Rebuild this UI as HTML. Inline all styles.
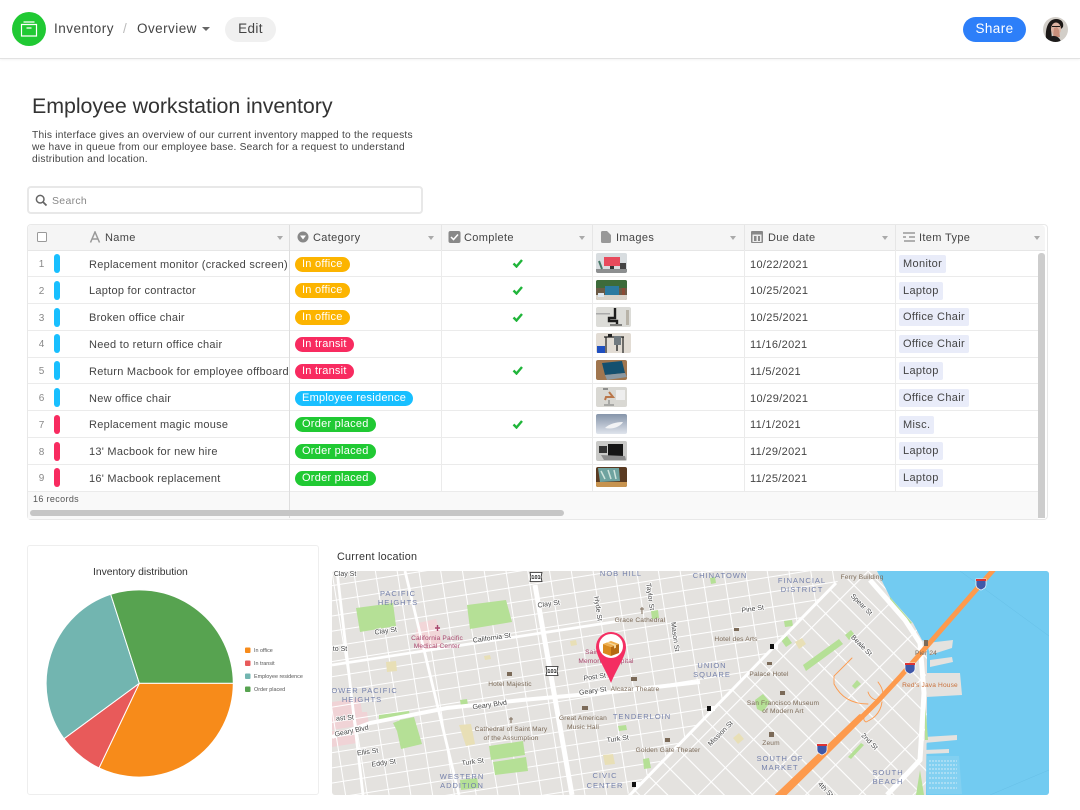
<!DOCTYPE html>
<html><head><meta charset="utf-8"><style>
html,body{margin:0;padding:0;background:#fff}
#p{position:relative;width:1080px;height:810px;overflow:hidden;font-family:"Liberation Sans",sans-serif;color:#333;background:#fff}
#p div,#p span.a,#p svg.a{position:absolute;white-space:nowrap}
.h{font-size:11px;letter-spacing:.35px;color:#444;top:231.5px;line-height:13px}
.ar{width:0;height:0;border:3.2px solid transparent;border-top:4px solid #aaa;border-bottom:0;top:235.5px}
.r{left:28px;width:1010px;height:26.8px;box-sizing:border-box;background:#fff;border-bottom:1.4px solid #ebebeb}
.n{left:0;width:27px;text-align:center;font-size:10px;color:#888;top:7.5px;line-height:13px}
.b{left:25.5px;top:3.5px;width:6.5px;height:19px;border-radius:3px}
.t{left:61px;top:7.2px;font-size:11px;letter-spacing:.26px;color:#444;line-height:14px}
.c{left:267px;top:6px;height:15px;line-height:15px;border-radius:8px;color:#fff;font-size:11px;letter-spacing:.25px;padding:0 7px}
.k{left:484px;top:7.5px}
.th{left:568px;top:2.5px;border-radius:2px}
.d2{left:722px;top:7.2px;font-size:11px;letter-spacing:.32px;color:#444;line-height:14px}
.y{left:871px;top:4.3px;height:18px;line-height:18px;background:#e9ecf9;border-radius:2px;font-size:11px;letter-spacing:.35px;color:#444;padding:0 4px}
.v{width:1.3px;background:#ebebeb;top:250px;height:241px}
.io{background:#fcb400}.tr{background:#f82b60}.er{background:#18bfff}.op{background:#20c933}
.bb{background:#18bfff}.br{background:#f82b60}
svg text{font-family:"Liberation Sans",sans-serif}
.m{font-size:7.5px;letter-spacing:1px;fill:#7581ab;text-anchor:middle}
.o{font-size:6.6px;fill:#7b6a58;text-anchor:middle;letter-spacing:.15px}
.s{font-size:7px;fill:#444;text-anchor:middle;stroke:#fff;stroke-width:1.6px;paint-order:stroke}
.l{font-size:5.4px;fill:#555}
</style></head><body><div id="p">

<!-- top bar -->
<div style="left:0;top:0;width:1080px;height:58px;background:#fff;border-bottom:1px solid #e2e2e2;box-shadow:0 1px 2px rgba(0,0,0,.05)"></div>
<svg class="a" style="left:12px;top:12px" width="34" height="34" viewBox="0 0 34 34"><circle cx="17" cy="17" r="17" fill="#20c933"/><g fill="none" stroke="#fff" stroke-width="1.2"><path d="M9.5 12.5h15v11.5h-15zM11.5 10h11M14.5 16h5"/></g></svg>
<div style="left:54px;top:21px;font-size:13.5px;letter-spacing:.5px;color:#444;line-height:16px">Inventory</div>
<div style="left:123px;top:21px;font-size:13.5px;color:#bbb;line-height:16px">/</div>
<div style="left:137px;top:21px;font-size:13.5px;letter-spacing:.45px;color:#444;line-height:16px">Overview</div>
<div style="left:202px;top:27px;width:0;height:0;border:4px solid transparent;border-top:4.5px solid #666;border-bottom:0"></div>
<div style="left:225px;top:17px;width:51px;height:25px;border-radius:13px;background:#f0f0f0;text-align:center;line-height:24px;font-size:13.5px;letter-spacing:.4px;color:#444">Edit</div>
<div style="left:963px;top:17px;width:63px;height:25px;border-radius:13px;background:#2d7ff9;text-align:center;line-height:24px;font-size:13.5px;letter-spacing:.4px;color:#fff">Share</div>
<svg class="a" style="left:1043px;top:17px" width="25" height="25" viewBox="0 0 25 25"><defs><clipPath id="av"><circle cx="12.5" cy="12.5" r="12.5"/></clipPath></defs><g clip-path="url(#av)"><rect width="25" height="25" fill="#d2cec8"/><path d="M3 22C2 12 5 2 13 2c6 0 8 4 7 8l-2 2-8-5-2 5 1 10z" fill="#1c1816"/><ellipse cx="13" cy="12" rx="5" ry="6.5" fill="#dcb3a1"/><path d="M9 9.500h8" stroke="#1c1816" stroke-width="1"/><path d="M10 20l1-9 3-1 2 3 1 7z" fill="#c98f7b"/><path d="M3 25c1-5 5-6 8-6s6 2 7 6z" fill="#1d1b1b"/></g></svg>

<!-- heading -->
<div style="left:32px;top:93px;font-size:21.4px;letter-spacing:-.05px;color:#333;line-height:26px">Employee workstation inventory</div>
<div style="left:32px;top:130px;font-size:10.2px;letter-spacing:.23px;color:#444;line-height:12px">This interface gives an overview of our current inventory mapped to the requests<br>we have in queue from our employee base. Search for a request to understand<br>distribution and location.</div>
<div style="left:27px;top:186px;width:392px;height:24px;border:2px solid #e8e8e8;border-radius:4px;background:#fff"></div>
<svg class="a" style="left:35px;top:194px" width="13" height="13" viewBox="0 0 13 13"><circle cx="5.2" cy="5.2" r="3.8" fill="none" stroke="#666" stroke-width="1.5"/><path d="M8 8l3.5 3.500" stroke="#666" stroke-width="1.8"/></svg>
<div style="left:52px;top:194.500px;font-size:10.5px;letter-spacing:.3px;color:#888;line-height:13px">Search</div>

<!-- table -->
<div style="left:27px;top:224px;width:1019px;height:294px;border:1px solid #e8e8e8;border-radius:4px;background:#fff"></div>
<div style="left:28px;top:225px;width:1017px;height:25px;background:#f5f5f5;border-bottom:1.5px solid #e6e6e6;border-radius:4px 4px 0 0"></div>
<div style="left:28px;top:491px;width:1010px;height:27px;background:#f9f9f9;border-top:1.5px solid #ebebeb"></div>

<div class="r" style="top:250.500px"><span class="a n">1</span><span class="a b bb"></span><span class="a t">Replacement monitor (cracked screen)</span><span class="a c io">In office</span><svg class="a k" width="12" height="10" viewBox="0 0 12 10"><path d="M1.500 5.500L4.500 8.500 10 2" fill="none" stroke="#20b53a" stroke-width="2.400"/></svg>
<svg class="a th" width="31" height="20" viewBox="0 0 31 20"><rect width="31" height="20" fill="#d8dde0"/><rect y="16" width="31" height="4" fill="#8d8f90"/><rect x="8" y="4" width="16" height="9" fill="#e74a5c"/><rect x="14" y="13" width="4" height="3" fill="#333"/><rect x="24" y="10" width="6" height="6" fill="#444"/><path d="M3 8l3 8" stroke="#476" stroke-width="2"/></svg><span class="a d2">10/22/2021</span><span class="a y">Monitor</span></div>

<div class="r" style="top:277.300px"><span class="a n">2</span><span class="a b bb"></span><span class="a t">Laptop for contractor</span><span class="a c io">In office</span><svg class="a k" width="12" height="10" viewBox="0 0 12 10"><path d="M1.500 5.500L4.500 8.500 10 2" fill="none" stroke="#20b53a" stroke-width="2.400"/></svg>
<svg class="a th" width="31" height="20" viewBox="0 0 31 20"><rect width="31" height="20" fill="#6b5a45"/><rect width="31" height="8" fill="#3d6b3a"/><rect x="9" y="6" width="14" height="9" fill="#2b7aa0"/><rect y="15" width="31" height="5" fill="#d8d2c8"/><rect x="2" y="13" width="6" height="4" fill="#dfe7ee"/><rect x="26" y="8" width="3" height="7" fill="#8a4b35"/></svg><span class="a d2">10/25/2021</span><span class="a y">Laptop</span></div>

<div class="r" style="top:304.100px"><span class="a n">3</span><span class="a b bb"></span><span class="a t">Broken office chair</span><span class="a c io">In office</span><svg class="a k" width="12" height="10" viewBox="0 0 12 10"><path d="M1.500 5.500L4.500 8.500 10 2" fill="none" stroke="#20b53a" stroke-width="2.400"/></svg>
<svg class="a th" width="35" height="20" viewBox="0 0 35 20"><rect width="35" height="20" fill="#dcdcd8"/><rect y="6" width="14" height="1.500" fill="#aaa"/><path d="M19 1v10h-6v3h8v3" fill="none" stroke="#1d1d1d" stroke-width="2.400"/><path d="M14 18h12" stroke="#222"/><rect x="30" y="3" width="3" height="15" fill="#b8b3a8"/></svg><span class="a d2">10/25/2021</span><span class="a y">Office Chair</span></div>

<div class="r" style="top:330.900px"><span class="a n">4</span><span class="a b bb"></span><span class="a t">Need to return office chair</span><span class="a c tr">In transit</span>
<svg class="a th" width="35" height="20" viewBox="0 0 35 20"><rect width="35" height="20" fill="#e2dcd4"/><path d="M8 4h20M10 4v16M27 4v16" stroke="#222" stroke-width="1.200" fill="none"/><rect x="18" y="3" width="7" height="9" fill="#717a80"/><path d="M21 12v6" stroke="#333" stroke-width="1.500"/><rect x="1" y="13" width="8" height="7" fill="#1f4fc0"/><rect x="12" y="1" width="4" height="3" fill="#222"/></svg><span class="a d2">11/16/2021</span><span class="a y">Office Chair</span></div>

<div class="r" style="top:357.700px"><span class="a n">5</span><span class="a b bb"></span><span class="a t" style="width:200px;overflow:hidden">Return Macbook for employee offboard</span><span class="a c tr">In transit</span><svg class="a k" width="12" height="10" viewBox="0 0 12 10"><path d="M1.500 5.500L4.500 8.500 10 2" fill="none" stroke="#20b53a" stroke-width="2.400"/></svg>
<svg class="a th" width="31" height="20" viewBox="0 0 31 20"><rect width="31" height="20" fill="#a0764f"/><path d="M6 3l20-2 3 12-20 2z" fill="#14506f"/><path d="M9 15l20-2 2 4-20 3z" fill="#8b99a3"/></svg><span class="a d2">11/5/2021</span><span class="a y">Laptop</span></div>

<div class="r" style="top:384.500px"><span class="a n">6</span><span class="a b bb"></span><span class="a t">New office chair</span><span class="a c er">Employee residence</span>
<svg class="a th" width="31" height="20" viewBox="0 0 31 20"><rect width="31" height="20" fill="#d9d8d3"/><rect x="20" y="3" width="9" height="10" fill="#eee"/><path d="M13 5l4 5h-7l-1 3" fill="none" stroke="#b9764a" stroke-width="2"/><path d="M7 2h5" stroke="#444"/><path d="M13 13v4M8 18h10" stroke="#777"/></svg><span class="a d2">10/29/2021</span><span class="a y">Office Chair</span></div>

<div class="r" style="top:411.300px"><span class="a n">7</span><span class="a b br"></span><span class="a t">Replacement magic mouse</span><span class="a c op">Order placed</span><svg class="a k" width="12" height="10" viewBox="0 0 12 10"><path d="M1.500 5.500L4.500 8.500 10 2" fill="none" stroke="#20b53a" stroke-width="2.400"/></svg>
<svg class="a th" width="31" height="20" viewBox="0 0 31 20"><defs><linearGradient id="g7" x1="0" y1="0" x2="0" y2="1"><stop offset="0" stop-color="#8695aa"/><stop offset="1" stop-color="#dfe4ec"/></linearGradient></defs><rect width="31" height="20" fill="url(#g7)"/><path d="M9 14c4-4 11-6 18-6-2 4-10 8-18 6z" fill="#f2f3f5"/></svg><span class="a d2">11/1/2021</span><span class="a y">Misc.</span></div>

<div class="r" style="top:438.100px"><span class="a n">8</span><span class="a b br"></span><span class="a t">13' Macbook for new hire</span><span class="a c op">Order placed</span>
<svg class="a th" width="31" height="20" viewBox="0 0 31 20"><rect width="31" height="20" fill="#c9c9c7"/><rect x="3" y="5" width="8" height="7" fill="#333"/><path d="M12 3h15v12H12z" fill="#151515"/><path d="M5 14l24 1 1 4H8z" fill="#8c8c8c"/></svg><span class="a d2">11/29/2021</span><span class="a y">Laptop</span></div>

<div class="r" style="top:464.900px;height:26px;border-bottom:0"><span class="a n">9</span><span class="a b br"></span><span class="a t">16' Macbook replacement</span><span class="a c op">Order placed</span>
<svg class="a th" width="31" height="20" viewBox="0 0 31 20"><rect width="31" height="20" fill="#5a3b22"/><path d="M2 1l21 0 1 13-20 1z" fill="#6fa3a0"/><path d="M5 4l4 8M12 3l3 9M18 3l2 9" stroke="#cfe3dc" stroke-width="1.500"/><path d="M0 15h31v5H0z" fill="#c7934f"/></svg><span class="a d2">11/25/2021</span><span class="a y">Laptop</span></div>

<div class="v" style="left:441px"></div><div class="v" style="left:592px"></div><div class="v" style="left:743.500px"></div><div class="v" style="left:895px"></div>
<div style="left:289px;top:225px;width:1.400px;height:293px;background:#dedede"></div>
<div style="left:441px;top:225px;width:1.300px;height:25px;background:#e6e6e6"></div><div style="left:592px;top:225px;width:1.300px;height:25px;background:#e6e6e6"></div><div style="left:743.500px;top:225px;width:1.300px;height:25px;background:#e6e6e6"></div><div style="left:895px;top:225px;width:1.300px;height:25px;background:#e6e6e6"></div>

<!-- header labels -->
<div style="left:37px;top:232px;width:8px;height:8px;border:1px solid #999;border-radius:1.500px;background:#fff"></div>
<svg class="a" style="left:89px;top:231px" width="12" height="12" viewBox="0 0 12 12"><path d="M1.500 11.500L6 1l4.500 10.500M3.200 8h5.600" fill="none" stroke="#999" stroke-width="1.500"/></svg>
<div class="h" style="left:105px">Name</div><div class="ar" style="left:277px"></div>
<svg class="a" style="left:297px;top:231px" width="12" height="12" viewBox="0 0 12 12"><circle cx="6" cy="6" r="5.500" fill="#888"/><path d="M3 4.500h6L6 8.500z" fill="#fff"/></svg>
<div class="h" style="left:313px">Category</div><div class="ar" style="left:428px"></div>
<svg class="a" style="left:448px;top:231px" width="13" height="12" viewBox="0 0 13 12"><rect x=".5" width="12" height="12" rx="2" fill="#888"/><path d="M3 6l2.500 2.500L10 3.500" fill="none" stroke="#fff" stroke-width="1.500"/></svg>
<div class="h" style="left:464px">Complete</div><div class="ar" style="left:579px"></div>
<svg class="a" style="left:601px;top:231px" width="10" height="12" viewBox="0 0 10 12"><path d="M0 1.500A1.500 1.500 0 0 1 1.500 0H6l4 4v6.500A1.500 1.500 0 0 1 8.500 12h-7A1.500 1.500 0 0 1 0 10.500z" fill="#999"/></svg>
<div class="h" style="left:616px">Images</div><div class="ar" style="left:730px"></div>
<svg class="a" style="left:751px;top:231px" width="12" height="12" viewBox="0 0 12 12"><rect width="12" height="12" rx="1" fill="#888"/><rect x="1.500" y="3.500" width="9" height="7.500" fill="#fff" opacity=".85"/><rect x="3" y="5" width="2.500" height="5" fill="#888"/><rect x="7" y="5" width="2" height="5" fill="#888"/></svg>
<div class="h" style="left:768px">Due date</div><div class="ar" style="left:882px"></div>
<svg class="a" style="left:903px;top:231px" width="12" height="12" viewBox="0 0 12 12"><path d="M0 2h12M6 6h6M0 6h3M1 10h11" stroke="#888" stroke-width="1.300"/></svg>
<div class="h" style="left:919px">Item Type</div><div class="ar" style="left:1034px"></div>

<div style="left:33px;top:493px;font-size:9px;letter-spacing:.35px;color:#555;line-height:12px">16 records</div>
<div style="left:30px;top:510px;width:534px;height:6px;border-radius:3px;background:#c6c6c6"></div>
<div style="left:1038px;top:253px;width:7px;height:265px;border-radius:3px 3px 0 0;background:#cdcdcd"></div>

<!-- pie card -->
<div style="left:27px;top:545px;width:290px;height:248px;border:1px solid #eee;border-radius:3px"></div>
<div style="left:93px;top:565.500px;font-size:10.400px;letter-spacing:-.05px;color:#333;line-height:13px">Inventory distribution</div>
<svg class="a" style="left:0;top:0" width="330" height="810" viewBox="0 0 330 810">
<g stroke="#fff" stroke-width="1">
<path d="M139.300 683.300L233.300 683.300A94 94 0 0 1 99 768Z" fill="#f78b1a"/>
<path d="M139.300 683.300L99 768A94 94 0 0 1 64 738.700Z" fill="#e85a5a"/>
<path d="M139.300 683.300L64 738.700A94 94 0 0 1 110.700 594.300Z" fill="#72b5b0"/>
<path d="M139.300 683.300L110.700 594.300A94 94 0 0 1 233.300 683.300Z" fill="#57a350"/>
</g>
<rect x="245" y="647.500" width="5.500" height="5.500" rx="1" fill="#f78b1a"/><text class="l" x="254" y="652">In office</text>
<rect x="245" y="660.500" width="5.500" height="5.500" rx="1" fill="#e85a5a"/><text class="l" x="254" y="665">In transit</text>
<rect x="245" y="673.500" width="5.500" height="5.500" rx="1" fill="#72b5b0"/><text class="l" x="254" y="678">Employee residence</text>
<rect x="245" y="686.500" width="5.500" height="5.500" rx="1" fill="#57a350"/><text class="l" x="254" y="691">Order placed</text>
</svg>

<!-- map -->
<div style="left:337px;top:550.500px;font-size:10.800px;letter-spacing:.25px;color:#333;line-height:13px">Current location</div>
<svg class="a" style="left:0;top:0" width="1080" height="810" viewBox="0 0 1080 810">
<defs>
<clipPath id="mc"><rect x="332" y="571" width="717" height="224" rx="3"/></clipPath>
<clipPath id="soma"><polygon points="848,571 1060,571 1060,800 622,800"/></clipPath>
<pattern id="g1" width="21.500" height="15" patternUnits="userSpaceOnUse" patternTransform="rotate(-9 600 650) translate(3 4)"><path d="M0 0H21.500M0 0V15" stroke="#fff" stroke-width="2" fill="none"/></pattern>
<pattern id="g2" width="38" height="20" patternUnits="userSpaceOnUse" patternTransform="rotate(45 900 680) translate(2 5)"><path d="M0 0H38M0 0V20" stroke="#fff" stroke-width="2.200" fill="none"/></pattern>
<g id="s1"><path d="M-5-5h10v6c0 3-3 4-5 5-2-1-5-2-5-5z" fill="#3f58a8" stroke="#fff" stroke-width=".7"/><path d="M-5-5h10v2h-10z" fill="#d33"/></g>
<g id="s2"><path d="M-6-4.500h12l-1 4.500 1 4.500h-12l1-4.500z" fill="#fff" stroke="#222" stroke-width=".8"/><text x="0" y="2" font-size="5.500" text-anchor="middle" font-weight="bold" fill="#222">101</text></g>
</defs>
<g clip-path="url(#mc)">
<rect x="332" y="571" width="717" height="224" fill="#e4e2df"/>
<!-- pink -->
<path d="M418 623l18-4 4 12 2 15-22 5-5-14z" fill="#f2d6d8"/>
<path d="M332 702l28-4 2 14 5 0 2 12-37 6zM332 731l24-2 1 14-25 4z" fill="#f0d3d6"/>
<rect x="332" y="571" width="717" height="224" fill="url(#g1)"/>
<!-- soma -->
<polygon points="848,571 1060,571 1060,800 622,800" fill="#e4e2df"/>
<rect x="600" y="560" width="460" height="250" fill="url(#g2)" clip-path="url(#soma)"/>
<!-- parks -->
<g fill="#b5e096">
<path d="M356 608l37-5 3 23-36 6z"/><path d="M467 605l39-5 6 22-42 7z"/>
<path d="M393 723l5-2 2-1 14-3 8 27-21 5-4-18z"/><path d="M489 746l34-5 2 14-34 5z"/><path d="M493 762l33-5 2 14-33 4z"/>
<path d="M379 715l30-4 1 5-31 5z"/><path d="M460 700l7-1 1 6-7 1z"/><path d="M460 780l17-2 2 10-18 2z"/>
<path d="M984 688l9-4 4 7-9 5z"/>
<path d="M618 726l8-1 1 5-8 1z"/><path d="M651 611l7-1 1 8-7 1z"/><path d="M643 759l6-1 2 10-7 1z"/><path d="M784 621l8-1 1 6-8 1z"/><path d="M710 578l5-1 1 6-5 1z"/>
<path d="M803 665l36-26 4 5-37 27z"/><path d="M781 640l6-4 5 7-6 4z"/><path d="M845 635l6-5 4 5-6 5z"/><path d="M852 686l5-6 4 4-6 5z"/><path d="M848 757l13-14 3 2-13 14z"/><path d="M755 700l8-6 7 8-7 10-6-3z"/>
</g>
<g fill="#e8dfb6"><path d="M459 725l12-1 4 20-9 2z"/><path d="M386 662l10-1 1 10-10 1zM570 641l6-1 1 5-6 1zM484 656l6-1 1 4-6 1z"/><path d="M603 755l10-1 2 10-10 1z"/><path d="M795 642l7-4 4 6-7 5z"/><path d="M733 738l6-5 5 6-6 5z"/></g>
<!-- water -->
<path d="M877 571L1049 571V795H926L927 700V642L922 640 913 623 890 597Z" fill="#72cbf1"/>
<g fill="#e4e2df"><path d="M927 643L953 640 952 648 930 655Z"/><path d="M930 660L952 657 953 662 930 667Z"/><path d="M926 673L960 673 962 695 926 697Z"/><path d="M924 737L957 735 957 740 924 743Z"/><path d="M924 750L949 749 949 753 924 754Z"/></g>
<path d="M890 597l22 26 -5 2-17-20zM925 700l3 40-3 0zM920 770l4 25-8 0z" fill="#b5e096"/>
<path d="M927 756h32l3 38h-35z" fill="#82d0f1"/>
<g stroke="#cdeaf6" stroke-width="1"><path d="M929 761h28M929 765h28M929 769h28M929 773h28M929 778h28M929 783h28M929 788h28" stroke-dasharray="2 1"/></g>
<path d="M1049 636L960 571M1049 770L990 795" stroke="#66bfe6" stroke-width=".5" fill="none"/>
<!-- major roads -->
<g fill="none" stroke="#fff">
<path d="M332 737L370 723L447 708L522 700L612 692L700 682" stroke-width="4"/>
<path d="M535 585L572 795" stroke-width="5"/>
<path d="M836 583L628 797" stroke-width="3"/>
<path d="M870 580L905 620L920 643L924 693L920 760L887 795" stroke-width="5"/>
<path d="M337 571L363 795M405 571L459 795M332 665L620 621" stroke-width="2.800"/>
</g>
<!-- highway -->
<g fill="none" stroke-linecap="round">
<path d="M995 568L900 677L877 702L781 797" stroke="#fd9a4d" stroke-width="5"/>
<path d="M860 716L772 800" stroke="#fd9a4d" stroke-width="3.500"/>
<g stroke="#fd9a4d" stroke-width=".9">
<path d="M852 658L834 676 834 684C840 696 850 704 868 704"/>
<path d="M878 682C884 690 884 696 880 700M868 692c2 6 6 8 12 9M882 702C880 716 870 720 866 722 862 720 864 716 868 712"/>
</g></g>
<use href="#s1" x="981" y="584"/><use href="#s1" x="910" y="668"/><use href="#s1" x="822" y="749"/>
<use href="#s2" x="536" y="577"/><use href="#s2" x="552" y="671"/>
<!-- district labels -->
<text class="m" x="621" y="576">NOB HILL</text><text class="m" x="398" y="596">PACIFIC</text><text class="m" x="398" y="605">HEIGHTS</text>
<text class="m" x="362" y="693">LOWER PACIFIC</text><text class="m" x="362" y="702">HEIGHTS</text>
<text class="m" x="642" y="719">TENDERLOIN</text><text class="m" x="462" y="779">WESTERN</text><text class="m" x="462" y="788">ADDITION</text>
<text class="m" x="605" y="778">CIVIC</text><text class="m" x="605" y="788">CENTER</text><text class="m" x="720" y="578">CHINATOWN</text>
<text class="m" x="802" y="583">FINANCIAL</text><text class="m" x="802" y="592">DISTRICT</text>
<text class="m" x="712" y="668">UNION</text><text class="m" x="712" y="677">SQUARE</text>
<text class="m" x="780" y="761">SOUTH OF</text><text class="m" x="780" y="770">MARKET</text><text class="m" x="888" y="775">SOUTH</text><text class="m" x="888" y="784">BEACH</text>
<!-- POIs -->
<text class="o" x="640" y="622">Grace Cathedral</text><text class="o" x="437" y="640" style="fill:#a8476e">California Pacific</text><text class="o" x="437" y="648" style="fill:#a8476e">Medical Center</text>
<text class="o" x="593" y="654" style="fill:#a8476e">Saint</text><text class="o" x="606" y="663" style="fill:#a8476e">Memorial Hospital</text>
<text class="o" x="510" y="686">Hotel Majestic</text><text class="o" x="635" y="691">Alcazar Theatre</text>
<text class="o" x="583" y="720">Great American</text><text class="o" x="583" y="729">Music Hall</text>
<text class="o" x="511" y="731">Cathedral of Saint Mary</text><text class="o" x="511" y="740">of the Assumption</text>
<text class="o" x="668" y="752">Golden Gate Theater</text><text class="o" x="736" y="641">Hotel des Arts</text><text class="o" x="769" y="676">Palace Hotel</text>
<text class="o" x="783" y="705">San Francisco Museum</text><text class="o" x="783" y="713">of Modern Art</text><text class="o" x="771" y="745">Zeum</text>
<text class="o" x="862" y="579">Ferry Building</text><text class="o" x="926" y="655">Pier 24</text><text class="o" x="930" y="687" style="fill:#c9703a">Red's Java House</text>
<path d="M440 628h-5M437.500 625v6" stroke="#a8476e" stroke-width="1.400"/>
<path d="M642 607v7M640 609h4M511 717v6M509 719h4" stroke="#7b6a58" stroke-width="1"/>
<g fill="#7b6a58"><rect x="507" y="672" width="5" height="4"/><rect x="631" y="677" width="6" height="4"/><rect x="582" y="706" width="6" height="4"/><rect x="665" y="738" width="5" height="4"/><rect x="734" y="628" width="5" height="3"/><rect x="767" y="662" width="5" height="3"/><rect x="780" y="691" width="5" height="4"/><rect x="769" y="732" width="5" height="5"/><rect x="924" y="640" width="4" height="6"/></g>
<g><rect x="770" y="644" width="8" height="5" fill="#fff"/><rect x="770" y="644" width="4" height="5" fill="#111"/><rect x="707" y="706" width="8" height="5" fill="#fff"/><rect x="707" y="706" width="4" height="5" fill="#111"/><rect x="632" y="782" width="8" height="5" fill="#fff"/><rect x="632" y="782" width="4" height="5" fill="#111"/></g>
<!-- street labels -->
<text class="s" transform="translate(386 633) rotate(-8)">Clay St</text><text class="s" transform="translate(492 640) rotate(-8)">California St</text><text class="s" transform="translate(549 606) rotate(-8)">Clay St</text>
<text class="s" transform="translate(345 720) rotate(-4)">ast St</text>
<text class="s" transform="translate(490 707) rotate(-8)">Geary Blvd</text><text class="s" transform="translate(352 733) rotate(-12)">Geary Blvd</text>
<text class="s" transform="translate(595 679) rotate(-8)">Post St</text><text class="s" transform="translate(593 693) rotate(-8)">Geary St</text>
<text class="s" transform="translate(618 741) rotate(-8)">Turk St</text><text class="s" transform="translate(473 764) rotate(-8)">Turk St</text>
<text class="s" transform="translate(368 754) rotate(-8)">Ellis St</text><text class="s" transform="translate(384 765) rotate(-8)">Eddy St</text>
<text class="s" transform="translate(596 609) rotate(82)">Hyde St</text><text class="s" transform="translate(648 597) rotate(82)">Taylor St</text><text class="s" transform="translate(673 637) rotate(82)">Mason St</text>
<text class="s" transform="translate(753 611) rotate(-8)">Pine St</text><text class="s" transform="translate(860 606) rotate(45)">Spear St</text><text class="s" transform="translate(860 647) rotate(45)">Beale St</text>
<text class="s" transform="translate(722 735) rotate(-45)">Mission St</text><text class="s" transform="translate(868 743) rotate(45)">2nd St</text><text class="s" transform="translate(824 791) rotate(45)">4th St</text>
<text class="s" x="345" y="576">Clay St</text><text class="s" x="340" y="651">to St</text>
<!-- marker -->
<path d="M611 683C605 668 596 656 596 647A15 15 0 0 1 626 647C626 656 617 668 611 683Z" fill="#f42e62"/>
<circle cx="611" cy="646" r="12" fill="#fff"/>
<path d="M603 644l8 3v9l-8-3z" fill="#d98a1e"/><path d="M611 647l8-3v9l-8 3z" fill="#b56a12"/><path d="M603 644l8-3 8 3-8 3z" fill="#efae4c"/><path d="M606 642.500l8 3v3l2-.700v-3l-8-2.800z" fill="#f5d79b"/>
</g>
</svg>
</div></body></html>
